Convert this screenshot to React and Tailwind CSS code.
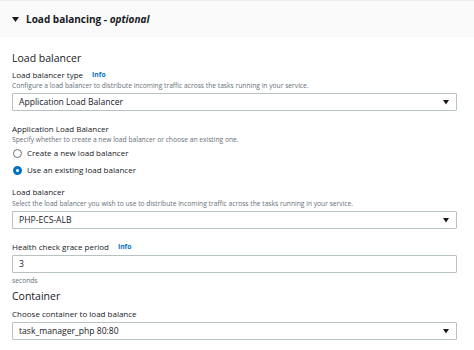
import React from 'react'

const font = { fontFamily: '"Open Sans", "Noto Sans", Arial, sans-serif' }

function Caret() {
  return (
    <svg width="6" height="5" viewBox="0 0 6 5" aria-hidden="true">
      <path d="M0 0 L6 0 L3 4.5 Z" fill="#16191f" />
    </svg>
  )
}

function Select({ value }) {
  return (
    <div className="h-[18px] border border-[#b9c2c3] rounded-[1px] bg-white flex items-center justify-between pl-[6px] pr-[7px]">
      <span className="text-[8.6px] text-[#16191f]">{value}</span>
      <Caret />
    </div>
  )
}

function Label({ children, info, className = '' }) {
  return (
    <div className={`h-[12px] flex items-center text-[8px] text-[#16191f] ${className}`}>
      <span>{children}</span>
      {info && <span className="ml-[9px] text-[6.8px] font-bold text-[#0073bb]">Info</span>}
    </div>
  )
}

function Desc({ children, className = '' }) {
  return <div className={`h-[10px] leading-[10px] text-[6.7px] text-[#687078] ${className}`}>{children}</div>
}

function Radio({ checked, children, className = '' }) {
  return (
    <div className={`h-[14px] flex items-center ${className}`}>
      {checked ? (
        <span className="w-[9px] h-[9px] rounded-full border-[3px] border-[#0073bb] bg-white ml-[1px]" />
      ) : (
        <span className="w-[9px] h-[9px] rounded-full border border-[#687078] bg-white ml-[1px]" />
      )}
      <span className="ml-[5px] text-[8px] text-[#16191f]">{children}</span>
    </div>
  )
}

export default function App() {
  return (
    <div className="w-[474px] h-[350px] bg-white overflow-hidden" style={font}>
      {/* Section header */}
      <div className="h-[37px] bg-[#fafafa] border-t border-[#eaeded] flex items-center pl-[12px]">
        <svg width="7" height="5" viewBox="0 0 7 5" aria-hidden="true">
          <path d="M0 0 L7 0 L3.5 5 Z" fill="#16191f" />
        </svg>
        <span className="ml-[7px] text-[10px] font-bold text-[#16191f]">
          Load balancing - <i>optional</i>
        </span>
      </div>

      <div className="pl-[12px] pr-[17px]">
        <div className="mt-[13px] h-[16px] leading-[16px] text-[10.5px] text-[#16191f]">Load balancer</div>

        <Label info className="mt-[3px]">Load balancer type</Label>
        <Desc>Configure a load balancer to distribute incoming traffic across the tasks running in your service.</Desc>
        <div className="mt-[2px]">
          <Select value="Application Load Balancer" />
        </div>

        <Label className="mt-[12px]">Application Load Balancer</Label>
        <Desc>Specify whether to create a new load balancer or choose an existing one.</Desc>
        <Radio className="mt-[1px]">Create a new load balancer</Radio>
        <Radio checked className="mt-[3px]">Use an existing load balancer</Radio>

        <Label className="mt-[9px]">Load balancer</Label>
        <Desc className="mt-[1px]">Select the load balancer you wish to use to distribute incoming traffic across the tasks running in your service.</Desc>
        <div className="mt-[2px]">
          <Select value="PHP-ECS-ALB" />
        </div>

        <Label info className="mt-[12px]">Health check grace period</Label>
        <div className="mt-[2px] h-[18px] border border-[#b9c2c3] rounded-[1px] flex items-center pl-[6px]">
          <span className="text-[8.6px] text-[#16191f]">3</span>
        </div>
        <Desc className="mt-[3px]">seconds</Desc>

        <div className="mt-[2px] h-[16px] leading-[16px] text-[10.5px] text-[#16191f]">Container</div>
        <Label className="mt-[4px]">Choose container to load balance</Label>
        <div className="mt-[2px]">
          <Select value="task_manager_php 80:80" />
        </div>
      </div>
    </div>
  )
}
